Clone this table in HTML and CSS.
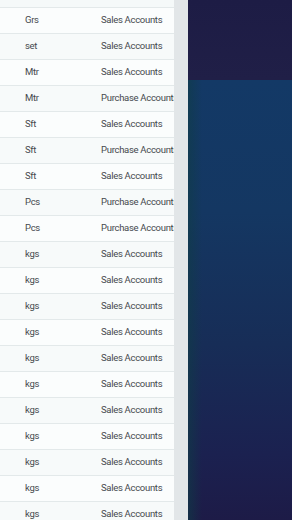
FILE: index.html
```html
<!DOCTYPE html>
<html>
<head>
<meta charset="utf-8">
<link rel="stylesheet" href="styles.css">
</head>
<body>
<div class="screen">
  <div class="table">
    <div class="row partial"></div>
    <div class="row"><span class="unit">Grs</span><span class="acct">Sales Accounts</span></div>
    <div class="row"><span class="unit">set</span><span class="acct">Sales Accounts</span></div>
    <div class="row"><span class="unit">Mtr</span><span class="acct">Sales Accounts</span></div>
    <div class="row"><span class="unit">Mtr</span><span class="acct">Purchase Accounts</span></div>
    <div class="row"><span class="unit">Sft</span><span class="acct">Sales Accounts</span></div>
    <div class="row"><span class="unit">Sft</span><span class="acct">Purchase Accounts</span></div>
    <div class="row"><span class="unit">Sft</span><span class="acct">Sales Accounts</span></div>
    <div class="row"><span class="unit">Pcs</span><span class="acct">Purchase Accounts</span></div>
    <div class="row"><span class="unit">Pcs</span><span class="acct">Purchase Accounts</span></div>
    <div class="row"><span class="unit">kgs</span><span class="acct">Sales Accounts</span></div>
    <div class="row"><span class="unit">kgs</span><span class="acct">Sales Accounts</span></div>
    <div class="row"><span class="unit">kgs</span><span class="acct">Sales Accounts</span></div>
    <div class="row"><span class="unit">kgs</span><span class="acct">Sales Accounts</span></div>
    <div class="row"><span class="unit">kgs</span><span class="acct">Sales Accounts</span></div>
    <div class="row"><span class="unit">kgs</span><span class="acct">Sales Accounts</span></div>
    <div class="row"><span class="unit">kgs</span><span class="acct">Sales Accounts</span></div>
    <div class="row"><span class="unit">kgs</span><span class="acct">Sales Accounts</span></div>
    <div class="row"><span class="unit">kgs</span><span class="acct">Sales Accounts</span></div>
    <div class="row"><span class="unit">kgs</span><span class="acct">Sales Accounts</span></div>
    <div class="row"><span class="unit">kgs</span><span class="acct">Sales Accounts</span></div>
  </div>
  <div class="gutter"></div>
  <div class="panel">
    <div class="panel-top"></div>
    <div class="panel-body"></div>
  </div>
</div>
</body>
</html>
```
FILE: styles.css
```css
html, body {
  margin: 0;
  padding: 0;
  width: 292px;
  height: 520px;
  overflow: hidden;
  background: #ffffff;
}
.screen {
  display: flex;
  width: 292px;
  height: 520px;
  overflow: hidden;
}
.table {
  width: 174px;
  flex: none;
  overflow: hidden;
  background: #f7fafa;
  font-family: Roboto, "Noto Sans", sans-serif;
  font-size: 9.5px;
  letter-spacing: -0.3px;
  color: #45494d;
}
.row {
  display: grid;
  grid-template-columns: 101px 1fr;
  height: 22px;
  padding-bottom: 3px;
  align-items: center;
  border-bottom: 1px solid #e3e9ea;
  white-space: nowrap;
}
.row:nth-child(even) {
  background: #fbfdfd;
}
.row.partial {
  height: 7px;
  padding-bottom: 0;
  background: #f5f9f9;
}
.unit {
  padding-left: 25px;
}
.acct {
  overflow: hidden;
}
.gutter {
  width: 14px;
  flex: none;
  background: #e2e6e8;
}
.panel {
  flex: 1;
  display: flex;
  flex-direction: column;
}
.panel-top {
  height: 80px;
  background: linear-gradient(180deg, #1d1c45 0%, #201f47 100%);
}
.panel-body {
  flex: 1;
  background:
    linear-gradient(90deg, rgba(15, 60, 70, 0.6) 0px, rgba(15, 60, 70, 0) 14px),
    linear-gradient(180deg, #133966 0%, #143762 30%, #172d57 60%, #1b2150 85%, #1d1b47 100%);
}
```
